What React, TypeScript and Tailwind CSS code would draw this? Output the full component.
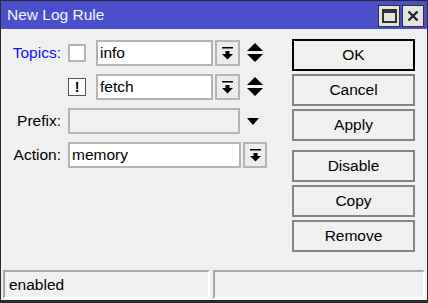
import React from 'react';

const font = { fontFamily: '"Liberation Sans", Arial, sans-serif' };

const DropIcon = () => (
  <svg width="11" height="13" viewBox="0 0 11 13">
    <rect x="0" y="0" width="11" height="1.5" fill="#000" />
    <rect x="3.5" y="4" width="4" height="3" fill="#000" />
    <polygon points="0,7 11,7 5.5,12.5" fill="#000" />
  </svg>
);

const DropButton: React.FC<{ className?: string }> = ({ className = '' }) => (
  <div className={`flex items-center justify-center border-2 border-[#b4b4b4] bg-[#ececec] ${className}`}>
    <DropIcon />
  </div>
);

const UpDown = () => (
  <svg width="16" height="20" viewBox="0 0 16 20" className="ml-[7px]">
    <polygon points="8,0 16,8 0,8" fill="#000" />
    <polygon points="0,11 16,11 8,19" fill="#000" />
  </svg>
);

const Field: React.FC<{ value?: string; className?: string; disabled?: boolean }> = ({ value, className = '', disabled }) => (
  <div
    className={`flex items-center border-2 px-[2px] text-[15.5px] text-black ${
      disabled ? 'border-[#b4b4b4] bg-[#f0f0f0]' : 'border-[#b4b4b4] bg-white'
    } ${className}`}
  >
    {value}
  </div>
);

const Label: React.FC<{ children: React.ReactNode; blue?: boolean }> = ({ children, blue }) => (
  <div className={`w-[56px] pr-[1px] text-right text-[15.5px] ${blue ? 'text-[#1010ff]' : 'text-black'}`}>{children}</div>
);

const Btn: React.FC<{ label: string; focused?: boolean }> = ({ label, focused }) => (
  <div
    className={`flex h-[32px] items-center justify-center border-2 bg-[#f0f0f0] text-[15.5px] text-black ${
      focused ? 'border-black' : 'border-[#848484]'
    }`}
  >
    {label}
  </div>
);

export default function App() {
  return (
    <div style={font} className="flex h-[303px] w-[428px] flex-col border border-b-[3px] border-[#2a2a2a] bg-[#f0f0f0]">
      {/* Title bar */}
      <div className="flex h-[28px] items-center justify-between bg-[#4c4fcc] pl-[6px] pr-[3px]">
        <span className="text-[15.5px] text-[#f4f4ff]">New Log Rule</span>
        <div className="flex gap-[2px] pt-[2px]">
          <div className="flex h-[22px] w-[22px] items-center justify-center border border-[#333] bg-[#e4e4e4]">
            <div className="h-[14px] w-[15px] border-2 border-t-[4px] border-[#333] bg-[#e4e4e4]" />
          </div>
          <div className="flex h-[22px] w-[22px] items-center justify-center border border-[#333] bg-[#e4e4e4]">
            <svg width="12" height="12" viewBox="0 0 12 12">
              <path d="M1.5 1.5 L10.5 10.5 M10.5 1.5 L1.5 10.5" stroke="#222" strokeWidth="2.4" />
            </svg>
          </div>
        </div>
      </div>

      {/* Body */}
      <div className="flex flex-1 justify-between">
        <div className="flex flex-col gap-[8px] pl-[5px] pt-[11px]">
          <div className="flex h-[26px] items-center">
            <Label blue>Topics:</Label>
            <div className="ml-[6px] h-[18px] w-[18px] border-2 border-[#b4b4b4] bg-white" />
            <Field value="info" className="ml-[10px] h-[26px] w-[117px]" />
            <DropButton className="ml-[2px] h-[26px] w-[25px]" />
            <UpDown />
          </div>
          <div className="flex h-[26px] items-center">
            <div className="w-[56px]" />
            <div className="ml-[6px] flex h-[18px] w-[18px] items-center justify-center border border-[#555] bg-white text-[14px] font-bold leading-none text-black">
              !
            </div>
            <Field value="fetch" className="ml-[10px] h-[26px] w-[117px]" />
            <DropButton className="ml-[2px] h-[26px] w-[25px]" />
            <UpDown />
          </div>
          <div className="flex h-[26px] items-center">
            <Label>Prefix:</Label>
            <Field disabled className="ml-[6px] h-[26px] w-[172px]" />
            <svg width="12" height="7" viewBox="0 0 12 7" className="ml-[7px]">
              <polygon points="0,0 12,0 6,7" fill="#000" />
            </svg>
          </div>
          <div className="flex h-[26px] items-center">
            <Label>Action:</Label>
            <Field value="memory" className="ml-[6px] h-[26px] w-[173px]" />
            <DropButton className="ml-[2px] h-[26px] w-[24px]" />
          </div>
        </div>

        <div className="mr-[12px] flex w-[123px] flex-col pt-[10px]">
          <div className="flex flex-col gap-[3px]">
            <Btn label="OK" focused />
            <Btn label="Cancel" />
            <Btn label="Apply" />
          </div>
          <div className="mt-[9px] flex flex-col gap-[3px]">
            <Btn label="Disable" />
            <Btn label="Copy" />
            <Btn label="Remove" />
          </div>
        </div>
      </div>

      {/* Status bar */}
      <div className="flex gap-[3px] pb-[1px] pl-[2px] pr-[2px]">
        <div className="flex h-[29px] w-[207px] items-center border-2 border-[#a8a8a8] border-b-white border-r-white pl-[4px] text-[15.5px] text-black">
          enabled
        </div>
        <div className="h-[29px] flex-1 border-2 border-[#a8a8a8] border-b-white border-r-white" />
      </div>
    </div>
  );
}
